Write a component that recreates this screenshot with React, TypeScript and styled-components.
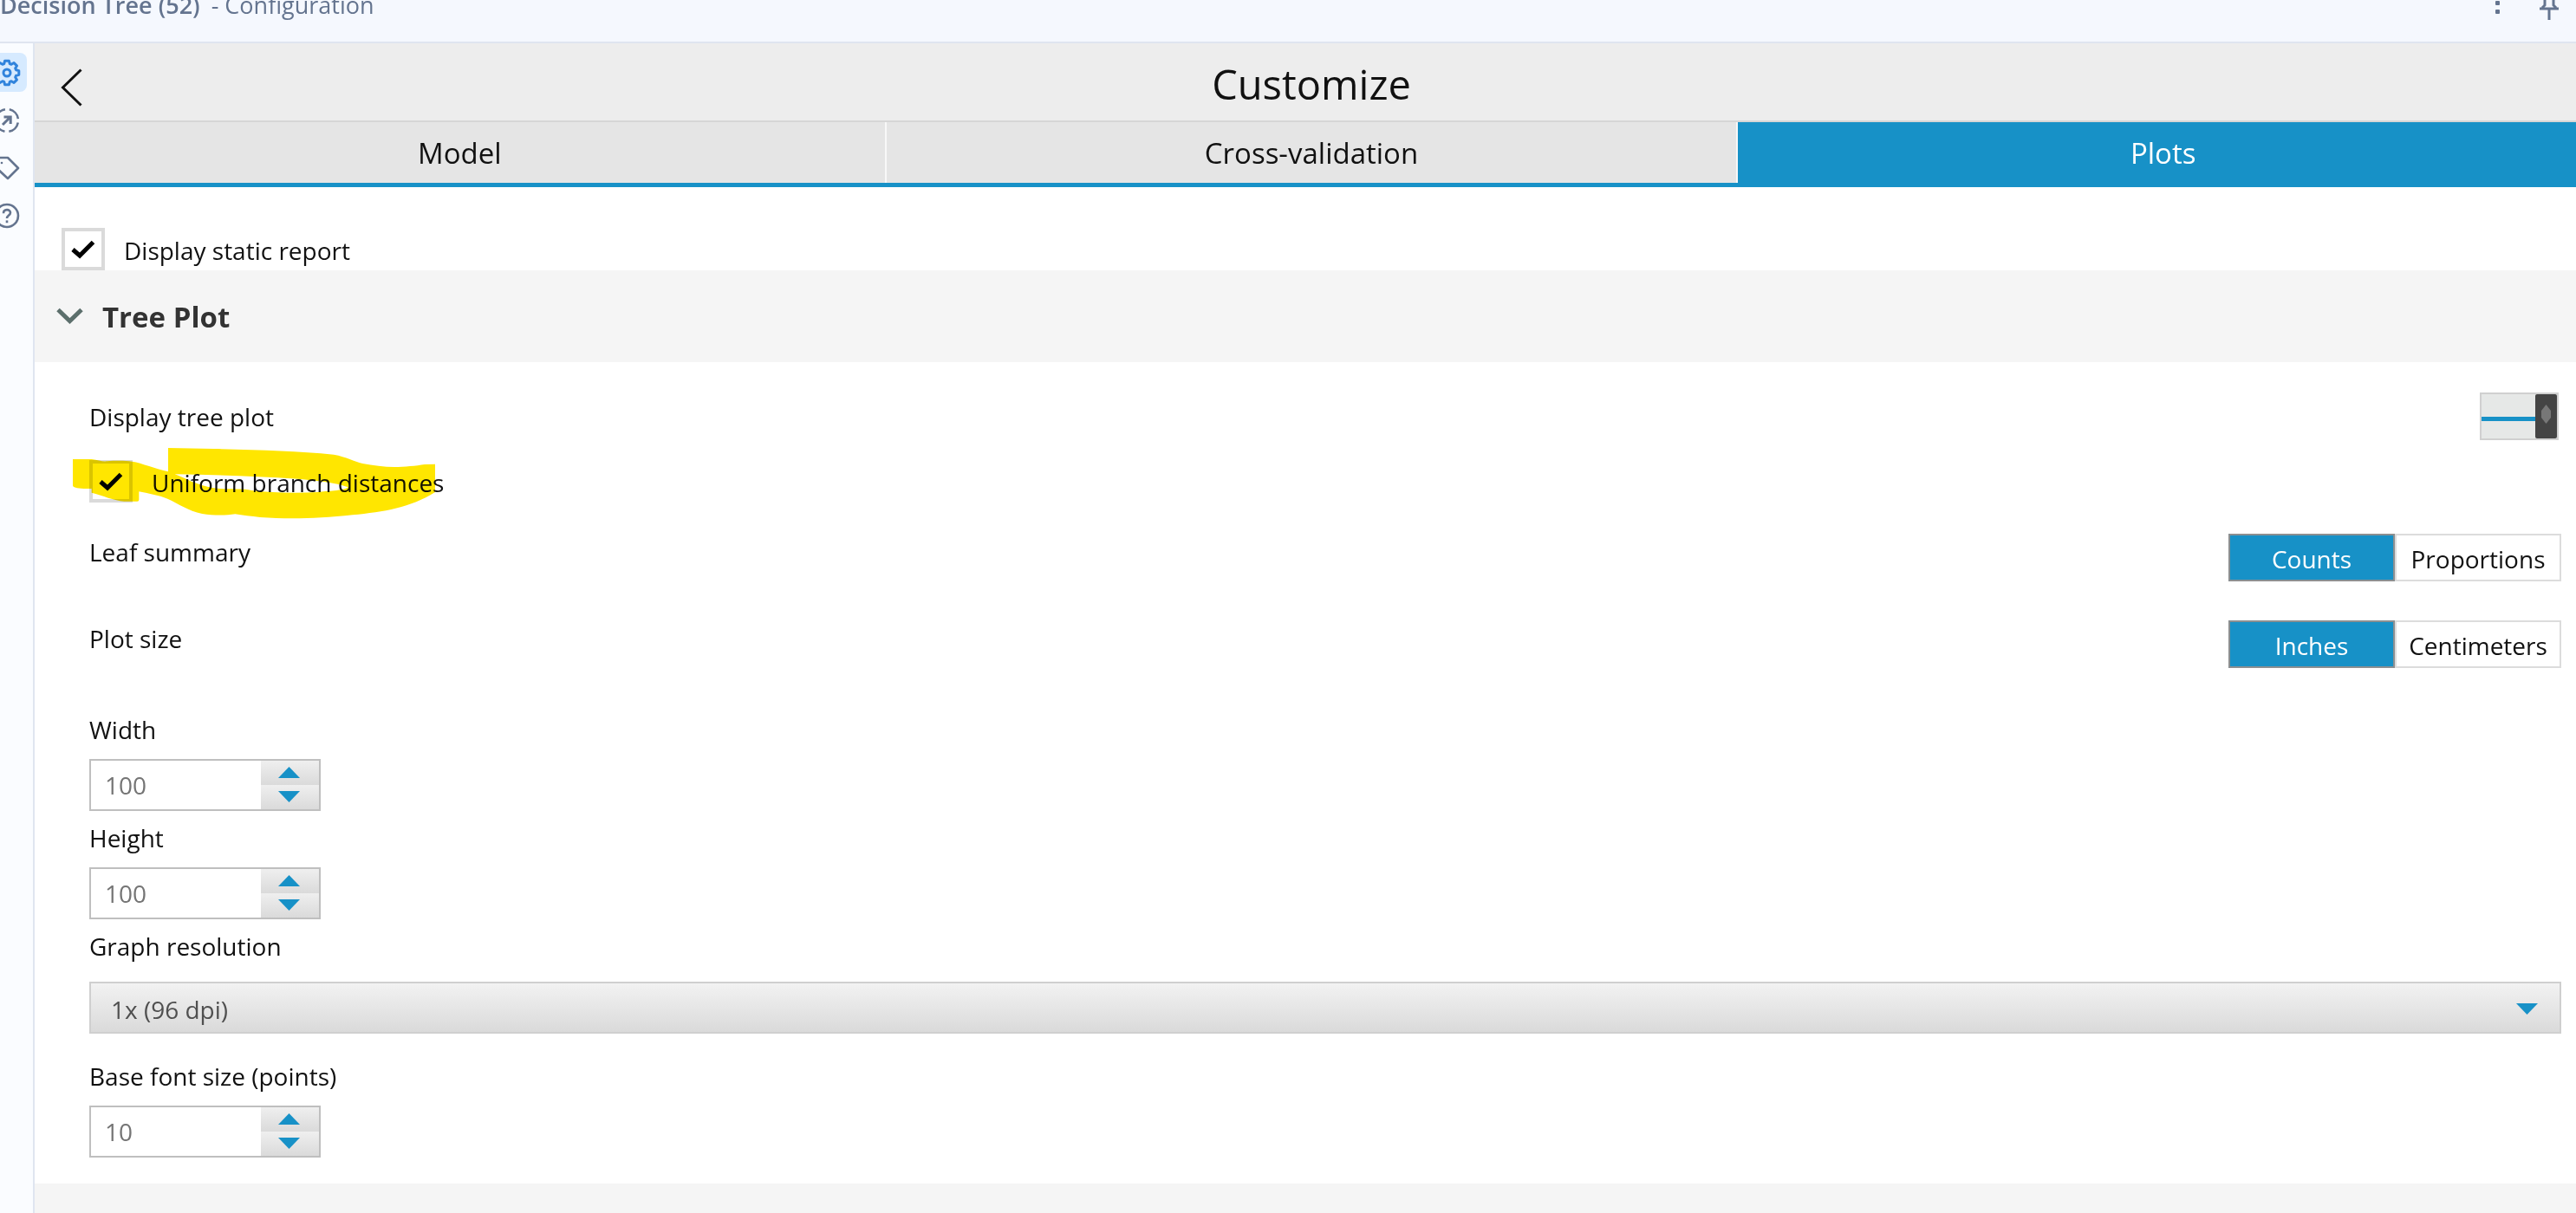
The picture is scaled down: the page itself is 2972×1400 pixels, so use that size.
import React, { useId, useState } from 'react';
import styled, { createGlobalStyle } from 'styled-components';

const color = {
  accent: '#1791c7',
  slate: '#64748f',
  line: '#dfe5f0',
  panel: '#f5f5f5',
};

const GlobalStyle = createGlobalStyle`
  *, *::before, *::after { box-sizing: border-box; }
  body {
    margin: 0;
    overflow: hidden;
    background: #fff;
    color: #111;
    font-family: "Open Sans", "Noto Sans", sans-serif;
    font-size: 28px;
    line-height: 38px;
  }
  button, input, select { font: inherit; color: inherit; margin: 0; }
  button { padding: 0; border: 0; background: none; cursor: pointer; }
  svg { display: block; }
`;

const Page = styled.div`
  height: 100vh;
  display: flex;
  flex-direction: column;
  overflow: hidden;
`;

const TopBar = styled.header`
  flex: none;
  height: 50px;
  display: flex;
  justify-content: space-between;
  align-items: flex-start;
  padding: 0 15px 0 0;
  background: #f5f8fe;
  border-bottom: 2px solid ${color.line};
  color: ${color.slate};
  font-size: 27px;
`;

const WindowTitle = styled.div`
  display: flex;
  gap: 13px;
  margin-top: -13px;
  strong { font-weight: 600; }
`;

const WindowActions = styled.div`
  display: flex;
  gap: 37px;
  margin-top: -8px;
`;

const Body = styled.div`
  flex: 1;
  min-height: 0;
  display: flex;
`;

const Rail = styled.nav`
  flex: none;
  width: 40px;
  padding-top: 11px;
  display: flex;
  flex-direction: column;
  align-items: flex-end;
  gap: 10px;
  padding-right: 7px;
  background: #fafcff;
  border-right: 2px solid ${color.line};
`;

const RailButton = styled.button<{ $active?: boolean }>`
  flex: none;
  width: 46px;
  height: 45px;
  display: grid;
  place-items: center;
  border-radius: 8px;
  background: ${(p) => (p.$active ? '#d6eaff' : 'transparent')};
  color: ${(p) => (p.$active ? '#3083dc' : color.slate)};
`;

const Main = styled.main`
  flex: 1;
  min-width: 0;
  margin-right: -14px;
  display: flex;
  flex-direction: column;
`;

const Heading = styled.div`
  display: grid;
  grid-template-columns: 84px 1fr 84px;
  align-items: center;
  padding: 16px 0 10px;
  background: #ededed;
  border-bottom: 2px solid #d6d6d6;
  h1 {
    margin: 0;
    text-align: center;
    font-size: 47px;
    line-height: 63px;
    font-weight: 400;
  }
`;

const BackButton = styled.button`
  padding: 6px 0 0 30px;
`;

const Tabs = styled.div`
  display: grid;
  grid-template-columns: repeat(3, 1fr);
  gap: 2px;
  background: #f8f8f8;
  border-bottom: 5px solid ${color.accent};
`;

const Tab = styled.button<{ $active: boolean }>`
  height: 70px;
  font-size: 33px;
  line-height: 45px;
  background: ${(p) => (p.$active ? color.accent : '#e5e5e5')};
  color: ${(p) => (p.$active ? '#fff' : '#111')};
`;

const ReportRow = styled.div`
  padding: 47px 31px 0;
`;

const SectionHeader = styled.button`
  flex: none;
  height: 106px;
  display: flex;
  align-items: center;
  gap: 22px;
  padding: 0 25px;
  background: ${color.panel};
  color: #333;
  font-size: 33px;
  line-height: 45px;
  font-weight: 700;
`;

const SectionFooter = styled.div`
  flex: 1;
  background: ${color.panel};
`;

const SectionBody = styled.div`
  display: flex;
  flex-direction: column;
  padding: 35px 31px 30px 63px;
`;

const Row = styled.div<{ $top?: number; $center?: boolean }>`
  display: flex;
  justify-content: space-between;
  align-items: ${(p) => (p.$center ? 'center' : 'flex-start')};
  margin-top: ${(p) => p.$top ?? 0}px;
`;

const RowLabel = styled.label`
  padding-top: 2px;
`;

const Field = styled.div<{ $top: number; $gap?: number }>`
  display: flex;
  flex-direction: column;
  align-items: stretch;
  gap: ${(p) => p.$gap ?? 15}px;
  margin-top: ${(p) => p.$top}px;
`;

const CheckRow = styled.div`
  position: relative;
  display: flex;
  align-items: center;
  gap: 22px;
  label { padding-top: 3px; }
`;

const Stack = styled.span`
  display: grid;
  align-items: center;
  justify-items: center;
  > * { grid-area: 1 / 1; }
  svg { pointer-events: none; z-index: 1; }
`;

const CheckInput = styled.input`
  appearance: none;
  width: 50px;
  height: 49px;
  border: 4px solid #dadada;
  background: #fff;
`;

const Highlight = styled.svg`
  position: absolute;
  left: -43px;
  top: -91px;
  z-index: 2;
  mix-blend-mode: multiply;
  pointer-events: none;
`;

const SwitchInput = styled.input`
  appearance: none;
  width: 91px;
  height: 55px;
  border: 2px solid #d0d0d0;
  background: #e6e8e7;
`;

const SwitchStack = styled(Stack)`
  margin-right: 3px;
`;

const Segments = styled.div`
  display: grid;
  grid-template-columns: 192px 192px;
`;

const Segment = styled.button<{ $active: boolean }>`
  height: 55px;
  border: 2px solid ${(p) => (p.$active ? '#8b8f91' : '#dcdcdc')};
  background: ${(p) => (p.$active ? color.accent : '#fff')};
  color: ${(p) => (p.$active ? '#fff' : '#111')};
  padding-top: 2px;
`;

const SpinBox = styled.div`
  width: 267px;
  height: 60px;
  display: grid;
  grid-template-columns: 1fr 67px;
  border: 2px solid #bfbfbf;
  background: #fff;
  input {
    min-width: 0;
    width: 100%;
    padding: 0 16px;
    border: 0;
    outline: 0;
    background: transparent;
    color: #757575;
  }
`;

const SpinButtons = styled.div`
  display: grid;
  grid-template-rows: 1fr 1fr;
  button {
    display: grid;
    place-items: center;
    padding: 0 3px 2px 0;
    background: linear-gradient(#efefef, #dadada);
  }
`;

const SelectStack = styled(Stack)`
  justify-items: stretch;
  svg { justify-self: end; margin: 2px 27px 0 0; }
`;

const SelectInput = styled.select`
  appearance: none;
  width: 100%;
  height: 60px;
  padding: 3px 60px 0 23px;
  border: 2px solid #cfcfcf;
  border-radius: 0;
  background: linear-gradient(#f2f2f2, #dadada);
  color: #505050;
`;

const gearPath = (() => {
  const pts: string[] = [];
  const teeth = 8;
  const step = (Math.PI * 2) / teeth;
  for (let i = 0; i < teeth; i++) {
    const a = i * step - Math.PI / 2;
    [[-0.3, 11], [-0.17, 14], [0.17, 14], [0.3, 11]].forEach(([d, r]) => {
      pts.push(`${(16 + r * Math.cos(a + d)).toFixed(2)} ${(16 + r * Math.sin(a + d)).toFixed(2)}`);
    });
  }
  return `M${pts.join('L')}Z`;
})();

const iconProps = {
  width: 32,
  height: 32,
  viewBox: '0 0 32 32',
  fill: 'none',
  stroke: 'currentColor',
  strokeWidth: 2.6,
  strokeLinejoin: 'round' as const,
  'aria-hidden': true,
};

const GearIcon = () => (
  <svg {...iconProps} strokeWidth={3}>
    <path d={gearPath} />
    <circle cx="16" cy="16" r="4" />
  </svg>
);

const RunIcon = () => (
  <svg {...iconProps}>
    <circle cx="16" cy="16" r="13" strokeDasharray="15.4 5.02" strokeDashoffset="-2.5" />
    <path d="M11 21L20 12M12.5 12H20.2V20" strokeWidth={3} strokeLinejoin="miter" />
  </svg>
);

const TagIcon = () => (
  <svg {...iconProps}>
    <path d="M3 4H17L29 16L17 28L3 15Z" />
    <circle cx="10" cy="10" r="1.3" fill="currentColor" stroke="none" />
  </svg>
);

const HelpIcon = () => (
  <svg {...iconProps}>
    <circle cx="16" cy="16" r="13" />
    <path d="M12 13.2C12 7.8 20 8 20 12.6C20 15.6 16 15.6 16 19" />
    <path d="M16 21.4V24.2" />
  </svg>
);

const Tick = () => (
  <svg width="28" height="22" viewBox="0 0 28 22" fill="none" stroke="#000" strokeWidth="5" aria-hidden>
    <path d="M2 11L10 18L25.500 2.500" />
  </svg>
);

const Triangle = ({ down }: { down?: boolean }) => (
  <svg width="25" height="13" viewBox="0 0 25 13" fill={color.accent} aria-hidden>
    <path d={down ? 'M0 0H25L12.500 13Z' : 'M0 13H25L12.500 0Z'} />
  </svg>
);

const CheckBox = ({ label, children }: { label: string; children?: React.ReactNode }) => {
  const id = useId();
  const [on, setOn] = useState(true);
  return (
    <CheckRow>
      <Stack>
        <CheckInput id={id} type="checkbox" checked={on} onChange={() => setOn(!on)} />
        {on && <Tick />}
      </Stack>
      <label htmlFor={id}>{label}</label>
      {children}
    </CheckRow>
  );
};

const Spinner = ({ label, initial, top }: { label: string; initial: number; top: number }) => {
  const id = useId();
  const [value, setValue] = useState(initial);
  return (
    <Field $top={top}>
      <label htmlFor={id}>{label}</label>
      <SpinBox>
        <input
          id={id}
          inputMode="numeric"
          value={value}
          onChange={(e) => setValue(Number(e.target.value) || 0)}
        />
        <SpinButtons>
          <button type="button" aria-label={`Increase ${label}`} onClick={() => setValue(value + 1)}>
            <Triangle />
          </button>
          <button type="button" aria-label={`Decrease ${label}`} onClick={() => setValue(value - 1)}>
            <Triangle down />
          </button>
        </SpinButtons>
      </SpinBox>
    </Field>
  );
};

const Choice = ({ label, options, top }: { label: string; options: string[]; top: number }) => {
  const id = useId();
  const [picked, setPicked] = useState(options[0]);
  return (
    <Row $top={top}>
      <RowLabel as="span" id={id}>{label}</RowLabel>
      <Segments role="group" aria-labelledby={id}>
        {options.map((o) => (
          <Segment key={o} type="button" $active={o === picked} aria-pressed={o === picked} onClick={() => setPicked(o)}>
            {o}
          </Segment>
        ))}
      </Segments>
    </Row>
  );
};

export default function App() {
  const [tab, setTab] = useState('Plots');
  const [showPlot, setShowPlot] = useState(true);

  return (
    <Page>
      <GlobalStyle />
      <TopBar>
        <WindowTitle>
          <strong>Decision Tree (52)</strong>
          <span>- Configuration</span>
        </WindowTitle>
        <WindowActions>
          <button type="button" aria-label="More options">
            <svg width="12" height="32" viewBox="0 0 12 32" fill={color.slate} aria-hidden>
              <rect x="3" y="0" width="5" height="5" rx="1" />
              <rect x="3" y="9" width="5" height="5" rx="1" />
              <rect x="3" y="19" width="5" height="5" rx="1" />
            </svg>
          </button>
          <button type="button" aria-label="Pin panel">
            <svg width="32" height="32" viewBox="0 0 32 32" fill="none" stroke={color.slate} strokeWidth="3" aria-hidden>
              <path d="M11 0V14L8 17M21 0V14L24 17M5 18H27M16 18V31" />
            </svg>
          </button>
        </WindowActions>
      </TopBar>
      <Body>
        <Rail aria-label="Panel sections">
          <RailButton type="button" $active aria-label="Configuration"><GearIcon /></RailButton>
          <RailButton type="button" aria-label="Run"><RunIcon /></RailButton>
          <RailButton type="button" aria-label="Annotation"><TagIcon /></RailButton>
          <RailButton type="button" aria-label="Help"><HelpIcon /></RailButton>
        </Rail>
        <Main>
          <Heading>
            <BackButton type="button" aria-label="Back">
              <svg width="26" height="44" viewBox="0 0 26 44" fill="none" stroke="#111" strokeWidth="3" aria-hidden>
                <path d="M23.500 1.500L2.500 22L23.500 42.500" />
              </svg>
            </BackButton>
            <h1>Customize</h1>
          </Heading>
          <Tabs role="tablist">
            {['Model', 'Cross-validation', 'Plots'].map((t) => (
              <Tab key={t} type="button" role="tab" aria-selected={t === tab} $active={t === tab} onClick={() => setTab(t)}>
                {t}
              </Tab>
            ))}
          </Tabs>
          <ReportRow>
            <CheckBox label="Display static report" />
          </ReportRow>
          <SectionHeader type="button" aria-expanded="true">
            <svg width="31" height="20" viewBox="0 0 31 20" fill="none" stroke="#5c6f6c" strokeWidth="5" aria-hidden>
              <path d="M2 2.500L15.500 15.500L29 2.500" />
            </svg>
            Tree Plot
          </SectionHeader>
          <SectionBody>
            <Row $center>
              <label htmlFor="display-tree">Display tree plot</label>
              <SwitchStack>
                <SwitchInput
                  id="display-tree"
                  type="checkbox"
                  role="switch"
                  checked={showPlot}
                  onChange={() => setShowPlot(!showPlot)}
                />
                <svg width="87" height="51" viewBox="0 0 87 51" aria-hidden>
                  <rect x="0" y="26" width="87" height="5" fill={color.accent} />
                  <g transform={showPlot ? 'translate(62 0)' : undefined}>
                    <rect width="25" height="51" rx="2" fill="#444" />
                    <path d="M12.500 12L18 19V27L12.500 34L7 27V19Z" fill="#777" />
                  </g>
                </svg>
              </SwitchStack>
            </Row>
            <Row $top={23}>
              <CheckBox label="Uniform branch distances">
                <Highlight width="520" height="180" viewBox="0 0 1560 540" fill="#ffe600" fillRule="evenodd" aria-hidden>
                  <path
                    d="M72 270L137 270C160 273 175 279 190 277C220 275 255 275 278 278C310 283 360 304 402 313L402 231L560 234C720 238 850 241 975 254C1020 262 1045 278 1075 285C1110 292 1150 297 1185 297C1220 297 1260 293 1290 288L1326 287L1326 384C1240 438 1150 452 1040 463C920 476 820 478 720 471C690 468 660 464 634 460C600 465 560 465 520 459C470 448 440 425 400 407C370 395 330 388 301 382L301 410Q301 416 295 416L250 416C215 414 175 395 137 386L137 372L110 372C85 370 72 368 72 360Z
                    M425 322C560 324 700 328 850 338C920 345 980 350 1025 367C1010 380 950 380 920 384C840 388 760 386 690 378C660 370 600 376 560 370C500 360 460 335 425 322Z"
                  />
                </Highlight>
              </CheckBox>
            </Row>
            <Choice label="Leaf summary" options={['Counts', 'Proportions']} top={36} />
            <Choice label="Plot size" options={['Inches', 'Centimeters']} top={45} />
            <Spinner label="Width" initial={100} top={52} />
            <Spinner label="Height" initial={100} top={12} />
            <Field $top={12} $gap={22}>
              <label htmlFor="resolution">Graph resolution</label>
              <SelectStack>
                <SelectInput id="resolution" defaultValue="1x (96 dpi)">
                  <option>1x (96 dpi)</option>
                  <option>2x (192 dpi)</option>
                  <option>3x (288 dpi)</option>
                </SelectInput>
                <Triangle down />
              </SelectStack>
            </Field>
            <Spinner label="Base font size (points)" initial={10} top={30} />
          </SectionBody>
          <SectionFooter />
        </Main>
      </Body>
    </Page>
  );
}
